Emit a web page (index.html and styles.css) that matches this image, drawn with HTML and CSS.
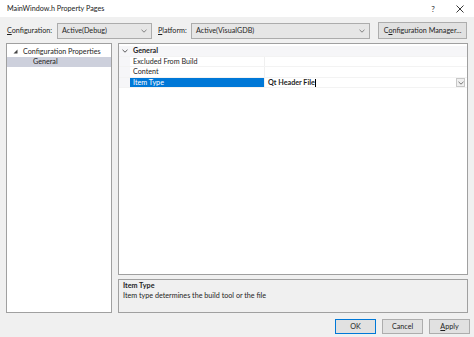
FILE: index.html
```html
<!DOCTYPE html>
<html lang="en">
<head>
  <meta charset="UTF-8" />
  <title>MainWindow.h Property Pages</title>
  <link rel="stylesheet" href="styles.css">
</head>
<body>
  <div class="window">
    <div class="titlebar">
      <span class="title">MainWindow.h Property Pages</span>
      <span class="help">?</span>
      <span class="close">
        <svg width="8" height="8" viewBox="0 0 8 8"><path d="M0.5 0.5L7.5 7.5M7.5 0.5L0.5 7.5" stroke="#222" stroke-width="0.9"/></svg>
      </span>
    </div>

    <div class="content">
      <div class="toolbar">
        <label class="lbl-config"><u>C</u>onfiguration:</label>
        <div class="combo combo-config">
          <span>Active(Debug)</span>
          <svg class="chev" width="6" height="4" viewBox="0 0 6 4"><path d="M0.5 0.8L3 3.2L5.5 0.8" fill="none" stroke="#666" stroke-width="0.8"/></svg>
        </div>
        <label class="lbl-platform"><u>P</u>latform:</label>
        <div class="combo combo-platform">
          <span>Active(VisualGDB)</span>
          <svg class="chev" width="6" height="4" viewBox="0 0 6 4"><path d="M0.5 0.8L3 3.2L5.5 0.8" fill="none" stroke="#666" stroke-width="0.8"/></svg>
        </div>
        <button class="btn btn-manager">C<u>o</u>nfiguration Manager...</button>
      </div>

      <div class="main">
        <div class="tree">
          <div class="tree-item">
            <svg class="expander" width="5" height="5" viewBox="0 0 5 5"><path d="M4.5 0.5L4.5 4.5L0.5 4.5Z" fill="#444"/></svg>
            <span>Configuration Properties</span>
          </div>
          <div class="tree-item child selected"><span>General</span></div>
        </div>

        <div class="right">
          <div class="grid">
            <div class="row category">
              <svg class="cat-chev" width="6" height="4" viewBox="0 0 6 4"><path d="M0.5 0.8L3 3.2L5.5 0.8" fill="none" stroke="#333" stroke-width="0.8"/></svg>
              <span class="name">General</span>
            </div>
            <div class="row">
              <span class="margin"></span>
              <span class="name">Excluded From Build</span>
              <span class="value"></span>
            </div>
            <div class="row">
              <span class="margin"></span>
              <span class="name">Content</span>
              <span class="value"></span>
            </div>
            <div class="row active">
              <span class="margin"></span>
              <span class="name">Item Type</span>
              <span class="value"><b>Qt Header File</b><i class="caret"></i>
                <span class="drop">
                  <svg width="6" height="4" viewBox="0 0 6 4"><path d="M0.5 0.8L3 3.2L5.5 0.8" fill="none" stroke="#555" stroke-width="0.8"/></svg>
                </span>
              </span>
            </div>
          </div>

          <div class="desc">
            <div class="desc-title">Item Type</div>
            <div class="desc-text">Item type determines the build tool or the file</div>
          </div>
        </div>
      </div>

      <div class="footer">
        <button class="btn btn-ok">OK</button>
        <button class="btn">Cancel</button>
        <button class="btn"><u>A</u>pply</button>
      </div>
    </div>
  </div>
</body>
</html>
```

FILE: styles.css
```css
* {
    margin: 0;
    padding: 0;
    box-sizing: border-box;
}

body {
    font-family: Lato, "Noto Sans", sans-serif;
    font-size: 7.2px;
    color: #1e1e1e;
    background: #f0f0f0;
}

u {
    text-decoration: underline;
    text-underline-offset: 1px;
}

.window {
    width: 474px;
    height: 337px;
    display: flex;
    flex-direction: column;
    background: #f0f0f0;
}

.titlebar {
    height: 17px;
    flex-shrink: 0;
    background: #ffffff;
    display: flex;
    align-items: center;
    padding-left: 7px;
}

.title {
    flex: 1;
    color: #222;
}

.help {
    width: 26px;
    text-align: center;
    font-size: 8px;
    color: #333;
}

.close {
    width: 28px;
    display: flex;
    justify-content: center;
    align-items: center;
}

.content {
    flex: 1;
    display: flex;
    flex-direction: column;
    padding: 5px 6px 4px 6px;
}

.toolbar {
    height: 17px;
    flex-shrink: 0;
    display: flex;
    align-items: center;
}

.lbl-config {
    width: 51px;
    padding-left: 1px;
}

.lbl-platform {
    width: 39px;
    padding-left: 6px;
}

.combo {
    height: 16px;
    background: #e6e6e6;
    border: 1px solid #acacac;
    display: flex;
    align-items: center;
    padding: 0 4px 0 4px;
}

.combo span {
    flex: 1;
}

.combo-config {
    width: 95px;
}

.combo-platform {
    width: 179px;
}

.btn {
    font-family: inherit;
    font-size: 7.2px;
    color: #1e1e1e;
    background: #e1e1e1;
    border: 1px solid #adadad;
    height: 15px;
    width: 41px;
}

.btn-manager {
    width: 89px;
    height: 17px;
    margin-left: 8px;
}

.main {
    height: 270px;
    flex-shrink: 0;
    margin-top: 4px;
    display: flex;
}

.tree {
    width: 106px;
    background: #ffffff;
    border: 1px solid #a0a0a0;
    padding-top: 2px;
}

.tree-item {
    height: 10.5px;
    display: flex;
    align-items: center;
    padding-left: 6px;
}

.expander {
    margin-right: 5px;
}

.tree-item.child {
    padding-left: 26px;
}

.tree-item.selected {
    background: #cdd0dc;
}

.right {
    flex: 1;
    margin-left: 6px;
    display: flex;
    flex-direction: column;
}

.grid {
    height: 232px;
    flex-shrink: 0;
    background: #ffffff;
    border: 1px solid #a0a0a0;
    padding-top: 2px;
}

.row {
    height: 10.6px;
    display: flex;
    align-items: center;
    border-bottom: 1px solid #f3f3f3;
}

.row.category {
    background: #f6f6f8;
    font-weight: bold;
}

.cat-chev {
    margin: 0 2px 0 3px;
}

.margin {
    width: 11px;
    height: 100%;
    background: #f6f6f8;
}

.row .name {
    width: 134px;
    padding-left: 3px;
    height: 100%;
    display: flex;
    align-items: center;
}

.row .value {
    flex: 1;
    height: 100%;
    display: flex;
    align-items: center;
    padding-left: 3px;
    border-left: 1px solid #f0f0f0;
}

.row.active .name {
    background: #0078d7;
    color: #ffffff;
}

.caret {
    display: inline-block;
    width: 1px;
    height: 8px;
    background: #000;
}

.drop {
    margin-left: auto;
    margin-right: 2px;
    width: 9px;
    height: 9px;
    border: 1px solid #c8c8c8;
    background: #f0f0f0;
    display: flex;
    align-items: center;
    justify-content: center;
}

.desc {
    height: 34px;
    margin-top: 4px;
    border: 1px solid #a0a0a0;
    background: #f0f0f0;
    padding: 1px 4px;
    line-height: 10px;
}

.desc-title {
    font-weight: bold;
}

.footer {
    display: flex;
    justify-content: flex-end;
    gap: 6px;
    margin-top: 6px;
    margin-right: -2px;
}

.btn-ok {
    border-color: #0078d7;
}
```
